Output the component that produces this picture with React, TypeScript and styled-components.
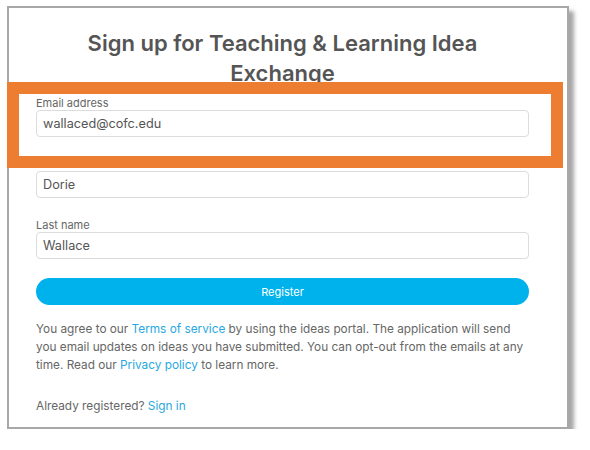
import React from "react";
import styled, { createGlobalStyle } from "styled-components";

const GlobalStyle = createGlobalStyle`
    body {
        margin: 0;
        background: #fff;
        font-family: Inter, "Noto Sans", "Liberation Sans", sans-serif;
    }
`

interface IField {
    label: string,
    value: string
}

const fields: IField[] = [
    { label: "Email address", value: "wallaced@cofc.edu" },
    { label: "First name", value: "Dorie" },
    { label: "Last name", value: "Wallace" },
]

const App: React.FC = () => {
    return (
        <>
            <GlobalStyle />
            <Page>
                <Card>
                    <Title>Sign up for Teaching &amp; Learning Idea Exchange</Title>
                    <Form>
                        {fields.map((f) => (
                            <Field key={f.label}>
                                <Label>{f.label}</Label>
                                <Input defaultValue={f.value} readOnly />
                            </Field>
                        ))}
                        <RegisterButton type="button">Register</RegisterButton>
                    </Form>
                    <Info>
                        You agree to our <Link>Terms of service</Link> by using the ideas portal. The application will send
                        you email updates on ideas you have submitted. You can opt-out from the emails at any
                        time. Read our <Link>Privacy policy</Link> to learn more.
                    </Info>
                    <Info>
                        Already registered? <Link>Sign in</Link>
                    </Info>
                    <Highlight />
                </Card>
            </Page>
        </>
    )
}

const Page = styled.div`
    padding: 6px 0 0 7px;
`

const Card = styled.div`
    position: relative;
    box-sizing: border-box;
    width: 562px;
    height: 423px;
    padding: 20px 38px 0 27px;
    background: #fff;
    border: 2px solid #a8a8a8;
    box-shadow: 5px 5px 4px rgba(0, 0, 0, 0.35);
`

const Title = styled.h1`
    margin: 0 20px 8px;
    font-size: 22px;
    line-height: 30px;
    font-weight: 600;
    color: #555;
    text-align: center;
`

const Form = styled.div`
    display: flex;
    flex-direction: column;
    gap: 20px;
`

const Field = styled.div`
    display: flex;
    flex-direction: column;
`

const Label = styled.label`
    font-size: 11px;
    line-height: 14px;
    color: #666;
`

const Input = styled.input`
    box-sizing: border-box;
    width: 100%;
    height: 27px;
    padding: 0 6px;
    border: 1px solid #dcdcdc;
    border-radius: 4px;
    font-family: inherit;
    font-size: 12.7px;
    color: #555;
    outline: none;
`

const RegisterButton = styled.button`
    height: 27px;
    margin-top: -1px;
    border: none;
    border-radius: 14px;
    background: #00b2ec;
    color: #fff;
    font-family: inherit;
    font-size: 11px;
`

const Info = styled.p`
    margin: 15px 0 23px;
    font-size: 11.8px;
    line-height: 18px;
    color: #666;
`

const Link = styled.a`
    color: #28a8e0;
    cursor: pointer;
`

const Highlight = styled.div`
    position: absolute;
    left: -2px;
    top: 74px;
    width: 556px;
    height: 86px;
    box-sizing: border-box;
    border: 12px solid #ed7d31;
    pointer-events: none;
`

export default App;
